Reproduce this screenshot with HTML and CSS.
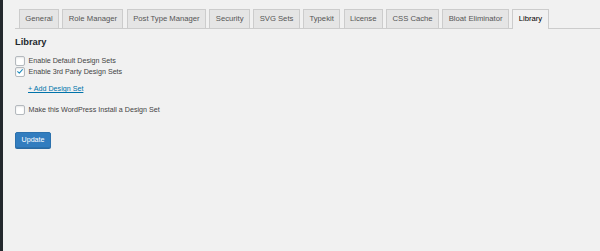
FILE: index.html
```html
<!DOCTYPE html>
<html lang="en">
<head>
  <meta charset="UTF-8">
  <meta name="viewport" content="width=device-width, initial-scale=1.0">
  <title>Library Settings</title>
  <link rel="stylesheet" href="styles.css">
</head>
<body>

  <div class="page">
    <div class="sidebar"></div>

    <div class="wrap">
      <!-- Settings tabs -->
      <nav class="tabs">
        <a class="tab">General</a>
        <a class="tab">Role Manager</a>
        <a class="tab">Post Type Manager</a>
        <a class="tab">Security</a>
        <a class="tab">SVG Sets</a>
        <a class="tab">Typekit</a>
        <a class="tab">License</a>
        <a class="tab">CSS Cache</a>
        <a class="tab">Bloat Eliminator</a>
        <a class="tab active">Library</a>
      </nav>

      <h2>Library</h2>

      <form class="options">
        <label class="check">
          <span class="box"></span>
          Enable Default Design Sets
        </label>
        <label class="check">
          <span class="box">
            <svg viewBox="0 0 9 9" width="9" height="9"><path d="M1.9 4.6 L3.7 6.4 L7.2 2.3" fill="none" stroke="#1e8cbe" stroke-width="1.2" stroke-linecap="round" stroke-linejoin="round"/></svg>
          </span>
          Enable 3rd Party Design Sets
        </label>

        <a class="add-link">+ Add Design Set</a>

        <label class="check">
          <span class="box"></span>
          Make this WordPress Install a Design Set
        </label>

        <div class="submit">
          <button type="button" class="button-primary">Update</button>
        </div>
      </form>
    </div>
  </div>

</body>
</html>
```

FILE: styles.css
```css
body {
  margin: 0;
  background-color: #f1f1f1;
  font-family: "Liberation Sans", Arial, sans-serif;
  font-size: 7.15px;
  color: #444;
}
.page {
  display: flex;
  min-height: 251px;
}
.sidebar {
  width: 3px;
  flex-shrink: 0;
  background-color: #23282d;
}
.wrap {
  flex: 1;
  padding: 9px 0 0 12px;
}
.tabs {
  display: flex;
  align-items: flex-end;
  border-bottom: 1px solid #ccc;
}
.tab {
  margin-left: 3.4px;
  padding: 2.75px 5.35px;
  line-height: 12.5px;
  font-size: 7.7px;
  color: #555;
  background-color: #e5e5e5;
  border: 1px solid #ccc;
  border-bottom: none;
}
.tab:first-child {
  margin-left: 4px;
}
.tab.active {
  color: #000;
  background-color: #f1f1f1;
  padding-bottom: 3.75px;
  margin-bottom: -1px;
}
h2 {
  margin: 7px 0 8px;
  font-size: 9.3px;
  line-height: 12px;
  color: #23282d;
}
.options {
  display: flex;
  flex-direction: column;
  align-items: flex-start;
}
.check {
  display: flex;
  align-items: center;
  gap: 3.5px;
  height: 10.5px;
}
.box {
  width: 8px;
  height: 8px;
  display: flex;
  align-items: center;
  justify-content: center;
  background-color: #fff;
  border: 1px solid #b4b9be;
  border-radius: 2px;
  box-shadow: inset 0 1px 2px rgba(0, 0, 0, 0.1);
}
.add-link {
  margin: 7px 0 11px 13px;
  color: #0073aa;
  text-decoration: underline;
  line-height: 10px;
}
.submit {
  margin-top: 16px;
}
.button-primary {
  height: 16.5px;
  padding: 0 5.5px;
  font-family: inherit;
  font-size: 7.15px;
  color: #fff;
  background-color: #327dbf;
  border: 1px solid #2c71ad;
  border-radius: 2px;
  box-shadow: 0 1px 0 #2a6aa3;
  cursor: pointer;
}
```
